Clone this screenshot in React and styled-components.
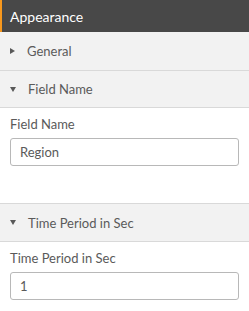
import React from "react";
import styled, { createGlobalStyle } from "styled-components";

const GlobalStyle = createGlobalStyle`
  html, body {
    margin: 0;
    padding: 0;
    background: #ffffff;
  }
  body {
    font-family: Lato, "Open Sans", sans-serif;
  }
`;

const Panel = styled.div`
  width: 249px;
  height: 311px;
  display: flex;
  flex-direction: column;
  background: #ffffff;
  overflow: hidden;
`;

const PanelHeader = styled.div`
  height: 32px;
  flex-shrink: 0;
  background: #484848;
  border-left: 2px solid #f8981d;
  padding-left: 8px;
  display: flex;
  align-items: center;
  color: #ffffff;
  font-size: 14px;
`;

const SectionHeader = styled.div`
  height: ${(p) => p.$height}px;
  flex-shrink: 0;
  box-sizing: border-box;
  background: #f2f2f2;
  border-bottom: 1px solid #d9d9d9;
  border-top: ${(p) => (p.$topBorder ? "1px solid #d9d9d9" : "none")};
  display: flex;
  align-items: center;
  padding-left: 10px;
  color: #5a5a5a;
  font-size: 13px;
`;

const Caret = styled.span`
  width: 0;
  height: 0;
  margin-right: 12px;
  ${(p) =>
    p.$open
      ? `border-left: 3.5px solid transparent;
         border-right: 3.5px solid transparent;
         border-top: 5px solid #595959;`
      : `border-top: 3.5px solid transparent;
         border-bottom: 3.5px solid transparent;
         border-left: 5px solid #595959;`}
`;

const SectionBody = styled.div`
  padding: 8px 10px 0 10px;
  height: ${(p) => p.$height}px;
  flex-shrink: 0;
  box-sizing: border-box;
  display: flex;
  flex-direction: column;
`;

const Label = styled.div`
  color: #5a5a5a;
  font-size: 13px;
  line-height: 16px;
  margin-bottom: 6px;
`;

const TextInput = styled.input`
  height: 28px;
  box-sizing: border-box;
  border: 1px solid #b8b8b8;
  border-radius: 3px;
  padding: 0 9px;
  font-family: Lato, "Open Sans", sans-serif;
  font-size: 13px;
  color: #5a5a5a;
  background: #ffffff;
  outline: none;
`;

export default function App() {
  return (
    <>
      <GlobalStyle />
      <Panel>
        <PanelHeader>Appearance</PanelHeader>
        <SectionHeader $height={39}>
          <Caret />
          General
        </SectionHeader>
        <SectionHeader $height={37}>
          <Caret $open />
          Field Name
        </SectionHeader>
        <SectionBody $height={95}>
          <Label>Field Name</Label>
          <TextInput defaultValue="Region" />
        </SectionBody>
        <SectionHeader $height={39} $topBorder>
          <Caret $open />
          Time Period in Sec
        </SectionHeader>
        <SectionBody $height={70}>
          <Label>Time Period in Sec</Label>
          <TextInput defaultValue="1" />
        </SectionBody>
      </Panel>
    </>
  );
}
